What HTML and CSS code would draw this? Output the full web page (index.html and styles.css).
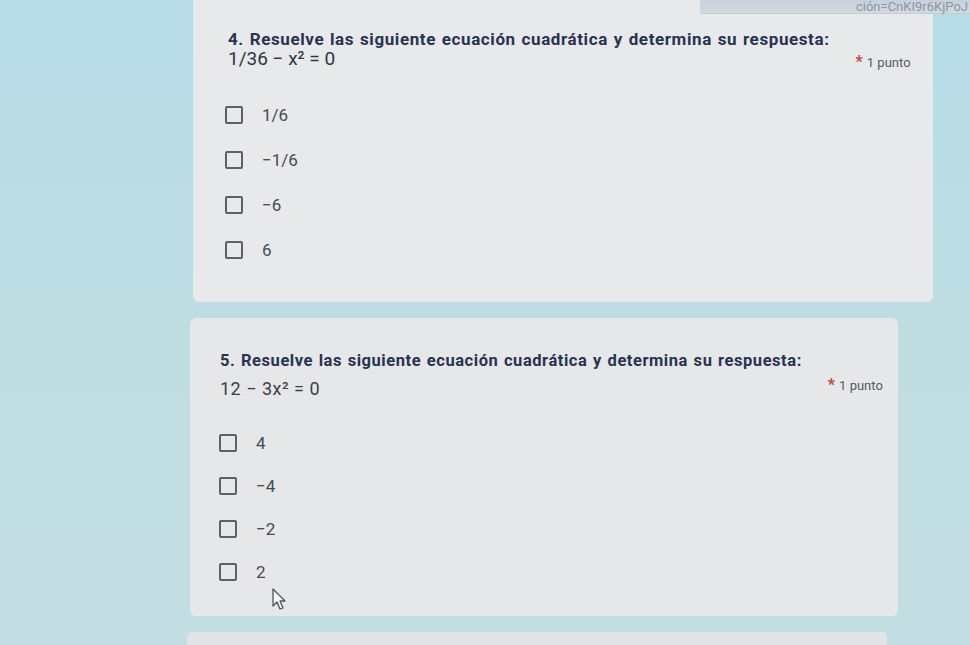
FILE: index.html
```html
<!DOCTYPE html>
<html lang="es">
<head>
<meta charset="utf-8">
<title>Formulario</title>
<link rel="stylesheet" href="styles.css">
</head>
<body>
<div class="topbar"><span class="url">ción=CnKI9r6KjPoJ</span></div>
<main class="page">
  <section class="card card-q4">
    <div class="qhead">
      <div class="qtext">
        <div class="qtitle">4. Resuelve las siguiente ecuación cuadrática y determina su respuesta:</div>
        <div class="qeq">1/36 − x² = 0</div>
      </div>
      <div class="qpts"><span class="star">*</span><span class="pts">1 punto</span></div>
    </div>
    <ul class="opts">
      <li class="opt"><span class="box"></span><span class="lbl">1/6</span></li>
      <li class="opt"><span class="box"></span><span class="lbl">−1/6</span></li>
      <li class="opt"><span class="box"></span><span class="lbl">−6</span></li>
      <li class="opt"><span class="box"></span><span class="lbl">6</span></li>
    </ul>
  </section>
  <section class="card card-q5">
    <div class="qhead">
      <div class="qtext">
        <div class="qtitle">5. Resuelve las siguiente ecuación cuadrática y determina su respuesta:</div>
        <div class="qeq">12 − 3x² = 0</div>
      </div>
      <div class="qpts"><span class="star">*</span><span class="pts">1 punto</span></div>
    </div>
    <ul class="opts">
      <li class="opt"><span class="box"></span><span class="lbl">4</span></li>
      <li class="opt"><span class="box"></span><span class="lbl">−4</span></li>
      <li class="opt"><span class="box"></span><span class="lbl">−2</span></li>
      <li class="opt"><span class="box"></span><span class="lbl">2</span></li>
    </ul>
    <svg class="cursor" width="16" height="24" viewBox="0 0 16 24">
      <path d="M1 1 L1 18 L5 14 L8 21 L11 20 L8 13 L13 13 Z" fill="#f4f5f6" stroke="#4b5563" stroke-width="1.3" stroke-linejoin="round"/>
    </svg>
  </section>
  <section class="card card-next"></section>
</main>
</body>
</html>
```

FILE: styles.css
```css
html, body {
  margin: 0;
  padding: 0;
}
body {
  width: 970px;
  height: 645px;
  overflow: hidden;
  background: linear-gradient(180deg, #b7dce6 0%, #bedde3 50%, #c3dee2 100%);
  font-family: Roboto, "Liberation Sans", Arial, sans-serif;
  position: relative;
}
.topbar {
  position: absolute;
  z-index: 2;
  top: 0;
  left: 700px;
  width: 270px;
  height: 14px;
  background: linear-gradient(180deg, #c6d1dc, #d3dae0);
  border-bottom: 1px solid #c4ccd3;
  display: flex;
  justify-content: flex-end;
  align-items: center;
  padding-right: 2px;
  box-sizing: border-box;
}
.url {
  font-size: 13px;
  line-height: 13px;
  color: #8b95a1;
  white-space: nowrap;
}
.page {
  display: flex;
  flex-direction: column;
  gap: 16px;
  padding-left: 193px;
}
.card {
  background: #e8e9ea;
  border-radius: 6px;
  box-sizing: border-box;
  position: relative;
}
.card-q4 {
  width: 740px;
  height: 302px;
  padding: 30px 0 0 35px;
  border-radius: 0 0 6px 6px;
}
.card-q5 {
  width: 708px;
  height: 298px;
  margin-left: -3px;
  padding: 33px 0 0 30px;
  background: #e5e7e8;
}
.card-next {
  width: 700px;
  height: 40px;
  margin-left: -6px;
  background: #e2e4e5;
}
.qhead {
  display: flex;
  align-items: flex-start;
}
.qtitle {
  font-size: 17px;
  font-weight: 700;
  line-height: 19px;
  color: #283351;
  white-space: nowrap;
  letter-spacing: 0.6px;
  word-spacing: 1px;
}
.qeq {
  font-size: 19px;
  line-height: 20px;
  color: #2f3540;
  white-space: nowrap;
}
.card-q5 .qtitle {
  font-size: 16.5px;
  letter-spacing: 0.55px;
}
.card-q5 .qeq {
  margin-top: 9px;
  font-size: 18px;
  letter-spacing: 0.5px;
  color: #3a404a;
}
.qpts {
  display: flex;
  align-items: baseline;
  gap: 4px;
  margin-left: 26px;
  margin-top: 22px;
}
.card-q5 .qpts {
  margin-left: 26px;
  margin-top: 24px;
}
.star {
  color: #c0463e;
  font-size: 16px;
  font-weight: 700;
}
.pts {
  font-size: 13px;
  color: #555b63;
}
.opts {
  list-style: none;
  margin: 21px 0 0 -3px;
  padding: 0;
  display: flex;
  flex-direction: column;
}
.card-q5 .opts {
  margin: 22px 0 0 -1px;
}
.opt {
  height: 45px;
  display: flex;
  align-items: center;
  gap: 19px;
}
.card-q5 .opt {
  height: 43px;
}
.box {
  width: 18px;
  height: 18px;
  box-sizing: border-box;
  border: 2px solid #5c6168;
  border-radius: 2px;
  flex: none;
}
.lbl {
  font-size: 17px;
  color: #454b54;
}
.cursor {
  position: absolute;
  left: 82px;
  top: 270px;
}
```
